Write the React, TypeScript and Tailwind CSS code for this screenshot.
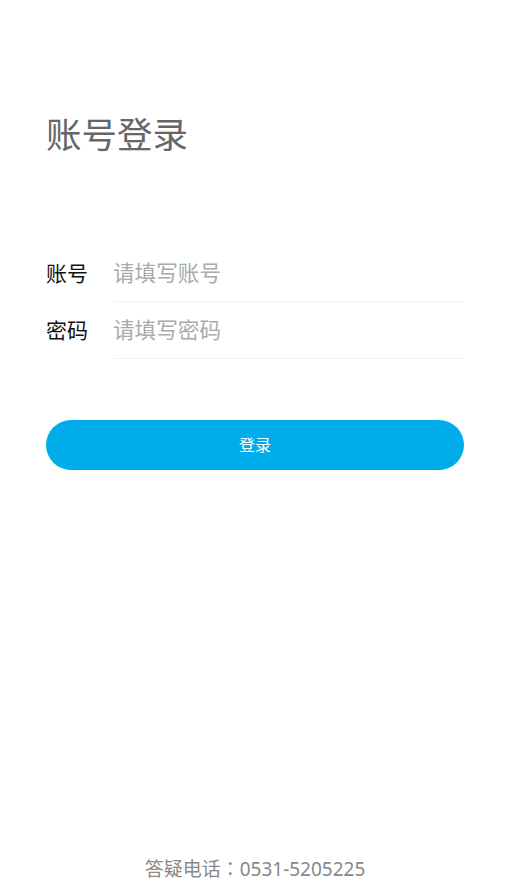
import React from "react";

export default function App() {
  return (
    <div
      className="flex h-[895px] w-full flex-col bg-white px-[46px]"
      style={{ fontFamily: '"Noto Sans", "Noto Sans CJK SC", sans-serif' }}
    >
      {/* Title */}
      <h1 className="mt-[110px] text-[35.5px] leading-[48px] text-[#666666]">账号登录</h1>

      {/* Form */}
      <div className="mt-[87px] flex flex-col">
        <div className="flex items-center">
          <span className="w-[67px] text-[21px] text-[#111111]">账号</span>
          <div className="flex h-[57px] flex-1 items-center border-b border-[#f3f3f3] pr-[2px]">
            <input
              className="w-full bg-transparent text-[21.6px] text-[#333] outline-none placeholder:text-[#aaaaaa]"
              placeholder="请填写账号"
            />
          </div>
        </div>
        <div className="flex items-center">
          <span className="w-[67px] text-[21px] text-[#111111]">密码</span>
          <div className="flex h-[57px] flex-1 items-center border-b border-[#f3f3f3] pr-[2px]">
            <input
              type="password"
              className="w-full bg-transparent text-[21.6px] text-[#333] outline-none placeholder:text-[#aaaaaa]"
              placeholder="请填写密码"
            />
          </div>
        </div>
      </div>

      {/* Submit */}
      <button className="mt-[61px] h-[50px] w-full rounded-full bg-[#00adea] text-[16px] text-white">
        登录
      </button>

      <div className="flex-1" />

      {/* Footer */}
      <p
        className="mb-[12px] text-center text-[19px] text-[#888888]"
        style={{ fontFamily: '"Noto Sans", "Noto Sans CJK TC", sans-serif' }}
      >
        答疑电话：0531-5205225
      </p>
    </div>
  );
}
